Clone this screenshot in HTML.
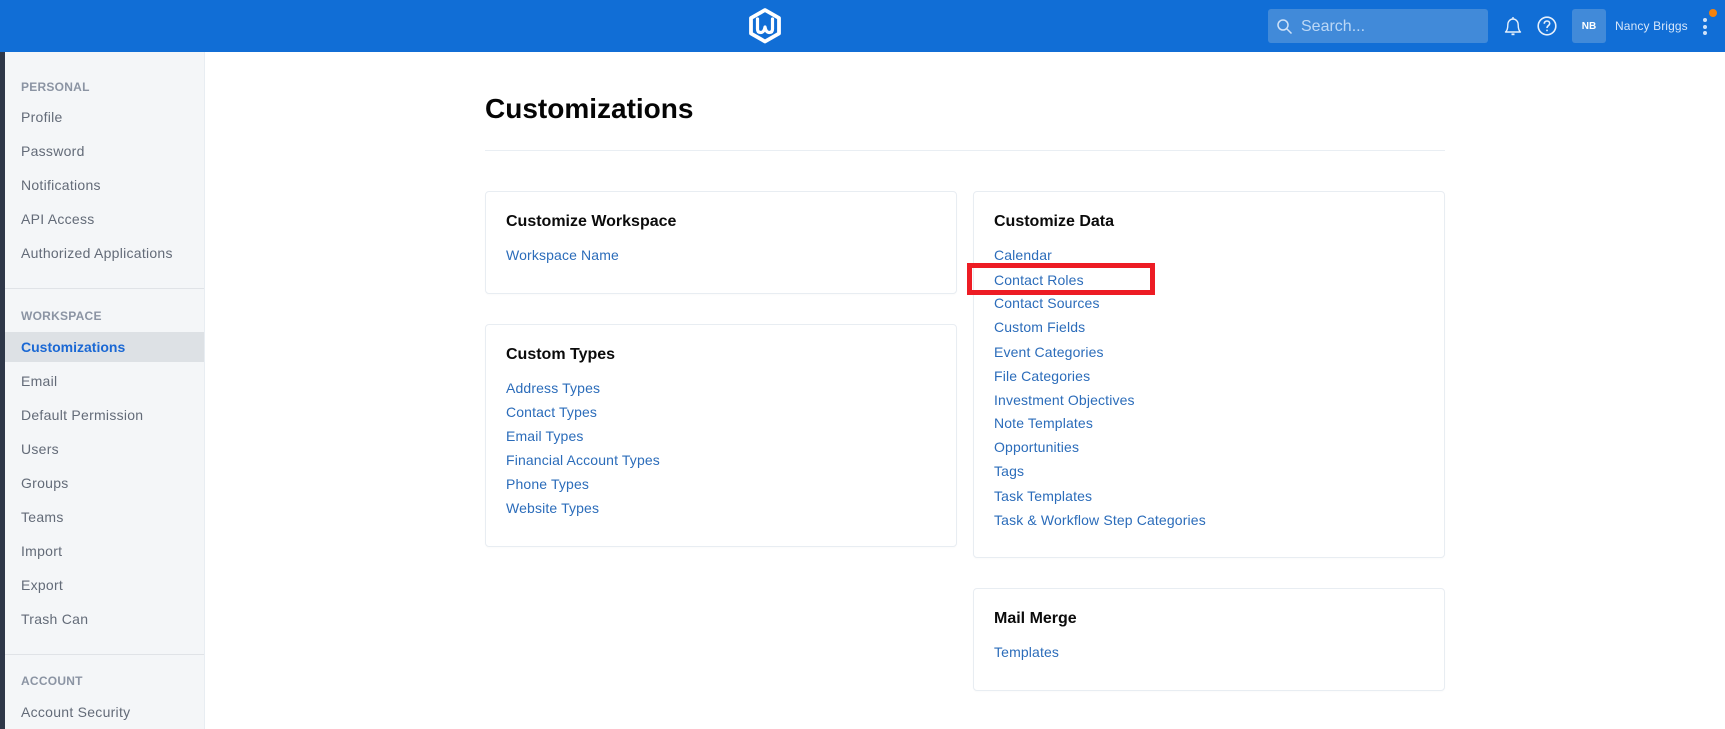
<!DOCTYPE html>
<html lang="en"><head><meta charset="utf-8"><title>Customizations</title>
<style>
html,body{margin:0;padding:0;width:1725px;height:729px;overflow:hidden;background:#fff;font-family:"Liberation Sans",sans-serif}
.t{position:absolute;white-space:nowrap;line-height:20px;height:20px}
#hd{position:absolute;left:0;top:0;width:1725px;height:52px;background:#116ed6}
#bar{position:absolute;left:0;top:52px;width:5px;height:677px;background:#2e3748}
#sb{position:absolute;left:5px;top:52px;width:199px;height:677px;background:#f4f6f8;border-right:1px solid #e8edf2}
.h{left:21px;font-size:12px;font-weight:bold;color:#8b94a3;letter-spacing:.25px}
.s{left:21px;font-size:14px;color:#636b78;letter-spacing:.27px}
.rule{position:absolute;height:1px;background:#e0e3e7}
.card{position:absolute;box-sizing:border-box;border:1px solid #e8edf2;border-radius:4px;background:#fff;box-shadow:0 1px 1px rgba(0,0,0,.02)}
.ct{font-size:16px;font-weight:bold;color:#0b0b0b;letter-spacing:0}
.l{font-size:14px;color:#2b6cba;letter-spacing:.14px}
</style></head><body>
<div id="hd"></div>
<svg style="position:absolute;left:745px;top:6px" width="40" height="40" viewBox="0 0 40 40" fill="none" stroke="#fff"><path d="M20 4 34 12V27.500L20 35.500 6 27.500V12Z" stroke-width="3.800" stroke-linejoin="round"/><path d="M12.500 13V23Q12.500 26.500 15.700 26.500 19 26.500 20 21 21 26.500 24.300 26.500 27.500 26.500 27.500 23V13" stroke-width="3.200" stroke-linecap="round" stroke-linejoin="round"/></svg>
<div style="position:absolute;left:1268px;top:9px;width:220px;height:34px;background:#418ad9;border-radius:3px"></div>
<svg style="position:absolute;left:1276px;top:18px" width="17" height="17" viewBox="0 0 17 17" fill="none" stroke="#cfe2f8" stroke-width="1.500"><circle cx="7" cy="7" r="5"/><path d="M10.500 10.500 15.500 15.500"/></svg>
<div class="t" style="left:1301px;top:17px;font-size:16px;color:#bcd8f6">Search...</div>
<svg style="position:absolute;left:1503px;top:14px" width="20" height="24" viewBox="0 0 20 24" fill="none" stroke="#e6f0fc" stroke-width="1.400"><path d="M2.500 18C4.500 16.500 4.800 14 4.800 11 4.800 7.500 7 5 10 5S15.200 7.500 15.200 11C15.200 14 15.500 16.500 17.500 18Z" stroke-linejoin="round"/><path d="M10 3V5"/><path d="M8.500 20.300H11.500" stroke-width="1.800"/></svg>
<svg style="position:absolute;left:1536px;top:15px" width="22" height="22" viewBox="0 0 22 22" fill="none" stroke="#e6f0fc" stroke-width="1.600"><circle cx="11" cy="11" r="8.800"/><path d="M8.300 8.700C8.300 7 9.500 6 11 6S13.700 7 13.700 8.500C13.700 10.500 11 10.500 11 13"/><path d="M11 14.700V16.200"/></svg>
<div style="position:absolute;left:1572px;top:9px;width:34px;height:34px;background:#418ad9;border-radius:3px;color:#fff;font-size:10px;font-weight:bold;line-height:36px;text-align:center">NB</div>
<div class="t" style="left:1615px;top:16px;font-size:12px;color:#d5e6fa;letter-spacing:.12px">Nancy Briggs</div>
<div style="position:absolute;left:1702.500px;top:18px;width:4px;height:4px;border-radius:50%;background:#cfe2f8"></div>
<div style="position:absolute;left:1702.500px;top:24.500px;width:4px;height:4px;border-radius:50%;background:#cfe2f8"></div>
<div style="position:absolute;left:1702.500px;top:30.500px;width:4px;height:4px;border-radius:50%;background:#cfe2f8"></div>
<div style="position:absolute;left:1709px;top:9px;width:8px;height:8px;border-radius:50%;background:#f5820d"></div>

<div id="bar"></div><div id="sb"></div>
<div class="t h" style="top:77px">PERSONAL</div>
<div class="t s" style="top:107px">Profile</div>
<div class="t s" style="top:141px">Password</div>
<div class="t s" style="top:175px">Notifications</div>
<div class="t s" style="top:209px">API Access</div>
<div class="t s" style="top:243px">Authorized Applications</div>
<div class="rule" style="left:5px;top:288px;width:199px"></div>
<div class="t h" style="top:306px">WORKSPACE</div>
<div style="position:absolute;left:5px;top:332px;width:199px;height:30px;background:#dde1e5"></div>
<div class="t s" style="top:337px;font-weight:bold;color:#1a68d4;letter-spacing:0">Customizations</div>
<div class="t s" style="top:371px">Email</div>
<div class="t s" style="top:405px">Default Permission</div>
<div class="t s" style="top:439px">Users</div>
<div class="t s" style="top:473px">Groups</div>
<div class="t s" style="top:507px">Teams</div>
<div class="t s" style="top:541px">Import</div>
<div class="t s" style="top:575px">Export</div>
<div class="t s" style="top:609px">Trash Can</div>
<div class="rule" style="left:5px;top:654px;width:199px"></div>
<div class="t h" style="top:671px">ACCOUNT</div>
<div class="t s" style="top:702px">Account Security</div>

<div class="t" style="left:485px;top:94px;height:30px;line-height:30px;font-size:28px;font-weight:bold;color:#050505;letter-spacing:0">Customizations</div>
<div class="rule" style="left:485px;top:150px;width:960px;background:#e9eef3"></div>

<div class="card" style="left:485px;top:191px;width:472px;height:103px"></div>
<div class="t ct" style="left:506px;top:212px">Customize Workspace</div>
<div class="t l" style="left:506px;top:245px">Workspace Name</div>

<div class="card" style="left:485px;top:324px;width:472px;height:223px"></div>
<div class="t ct" style="left:506px;top:345px">Custom Types</div>
<div class="t l" style="left:506px;top:378px">Address Types</div>
<div class="t l" style="left:506px;top:402px">Contact Types</div>
<div class="t l" style="left:506px;top:426px">Email Types</div>
<div class="t l" style="left:506px;top:450px">Financial Account Types</div>
<div class="t l" style="left:506px;top:474px">Phone Types</div>
<div class="t l" style="left:506px;top:498px">Website Types</div>

<div class="card" style="left:973px;top:191px;width:472px;height:367px"></div>
<div class="t ct" style="left:994px;top:212px">Customize Data</div>
<div class="t l" style="left:994px;top:245px">Calendar</div>
<div class="t l" style="left:994px;top:270px">Contact Roles</div>
<div class="t l" style="left:994px;top:293px">Contact Sources</div>
<div class="t l" style="left:994px;top:317px">Custom Fields</div>
<div class="t l" style="left:994px;top:342px">Event Categories</div>
<div class="t l" style="left:994px;top:366px">File Categories</div>
<div class="t l" style="left:994px;top:390px">Investment Objectives</div>
<div class="t l" style="left:994px;top:413px">Note Templates</div>
<div class="t l" style="left:994px;top:437px">Opportunities</div>
<div class="t l" style="left:994px;top:461px">Tags</div>
<div class="t l" style="left:994px;top:486px">Task Templates</div>
<div class="t l" style="left:994px;top:510px">Task &amp; Workflow Step Categories</div>

<div class="card" style="left:973px;top:588px;width:472px;height:103px"></div>
<div class="t ct" style="left:994px;top:609px">Mail Merge</div>
<div class="t l" style="left:994px;top:642px">Templates</div>

<div style="position:absolute;left:967px;top:263px;width:188px;height:32px;box-sizing:border-box;border:5px solid #ed1c24"></div>
</body></html>
